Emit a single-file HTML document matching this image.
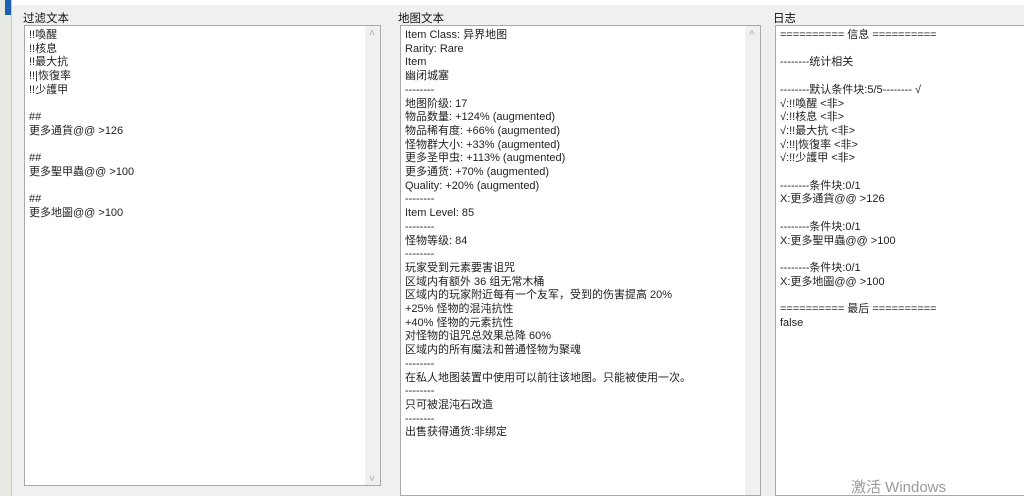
<!DOCTYPE html>
<html><head><meta charset="utf-8"><style>
*{margin:0;padding:0;box-sizing:border-box}
html,body{width:1024px;height:496px;overflow:hidden}
body{background:#f0f0f0;position:relative;font-family:"Liberation Sans","Microsoft YaHei","Noto Sans CJK SC",sans-serif;font-size:11px;color:#222}
.top{position:absolute;left:0;top:0;width:1024px;height:5px;background:#fff}
.side{position:absolute;left:0;top:0;width:12px;height:496px;background:#e8ebe4;border-right:1px solid #c8c8c8}
.blue{position:absolute;left:5px;top:0;width:6px;height:15px;background:#1d5fb0}
.lbl{position:absolute;top:10px;font-size:11.5px;color:#111}
.box{position:absolute;top:25px;background:#fff;border:1px solid #a8a8a8}
.sb{position:absolute;top:0;right:0;width:15px;bottom:0;background:#f0f0f0}
.sb:before{content:"˄";position:absolute;top:2px;left:4px;color:#aaa;font-size:10px}
.sb.d:after{content:"˅";position:absolute;bottom:0;left:4px;color:#aaa;font-size:10px}
.t{position:absolute;left:4px;top:3px;line-height:13.7px;white-space:pre;font-size:11px}
.wm{position:absolute;left:851px;top:476px;font-size:15px;color:#9a9a9a}
</style></head><body>
<div class="top"></div><div class="side"></div><div class="blue"></div>
<div class="lbl" style="left:23px">过滤文本</div>
<div class="lbl" style="left:398px">地图文本</div>
<div class="lbl" style="left:773px">日志</div>
<div class="box" style="left:24px;width:357px;height:461px"><div class="sb d"></div><div class="t">!!喚醒
!!核息
!!最大抗
!!|恢復率
!!少護甲

##
更多通貨@@ >126

##
更多聖甲蟲@@ >100

##
更多地圖@@ >100</div></div>
<div class="box" style="left:400px;width:361px;height:471px"><div class="sb"></div><div class="t">Item Class: 异界地图
Rarity: Rare
Item
幽闭城塞
--------
地图阶级: 17
物品数量: +124% (augmented)
物品稀有度: +66% (augmented)
怪物群大小: +33% (augmented)
更多圣甲虫: +113% (augmented)
更多通货: +70% (augmented)
Quality: +20% (augmented)
--------
Item Level: 85
--------
怪物等级: 84
--------
玩家受到元素要害诅咒
区域内有额外 36 组无常木桶
区域内的玩家附近每有一个友军，受到的伤害提高 20%
+25% 怪物的混沌抗性
+40% 怪物的元素抗性
对怪物的诅咒总效果总降 60%
区域内的所有魔法和普通怪物为聚魂
--------
在私人地图装置中使用可以前往该地图。只能被使用一次。
--------
只可被混沌石改造
--------
出售获得通货:非绑定</div></div>
<div class="box" style="left:775px;width:260px;height:471px"><div class="t">========== 信息 ==========

--------统计相关

--------默认条件块:5/5-------- √
√:!!喚醒 &lt;非&gt;
√:!!核息 &lt;非&gt;
√:!!最大抗 &lt;非&gt;
√:!!|恢復率 &lt;非&gt;
√:!!少護甲 &lt;非&gt;

--------条件块:0/1
X:更多通貨@@ >126

--------条件块:0/1
X:更多聖甲蟲@@ >100

--------条件块:0/1
X:更多地圖@@ >100

========== 最后 ==========
false</div></div>
<div class="wm">激活 Windows</div>
</body></html>
